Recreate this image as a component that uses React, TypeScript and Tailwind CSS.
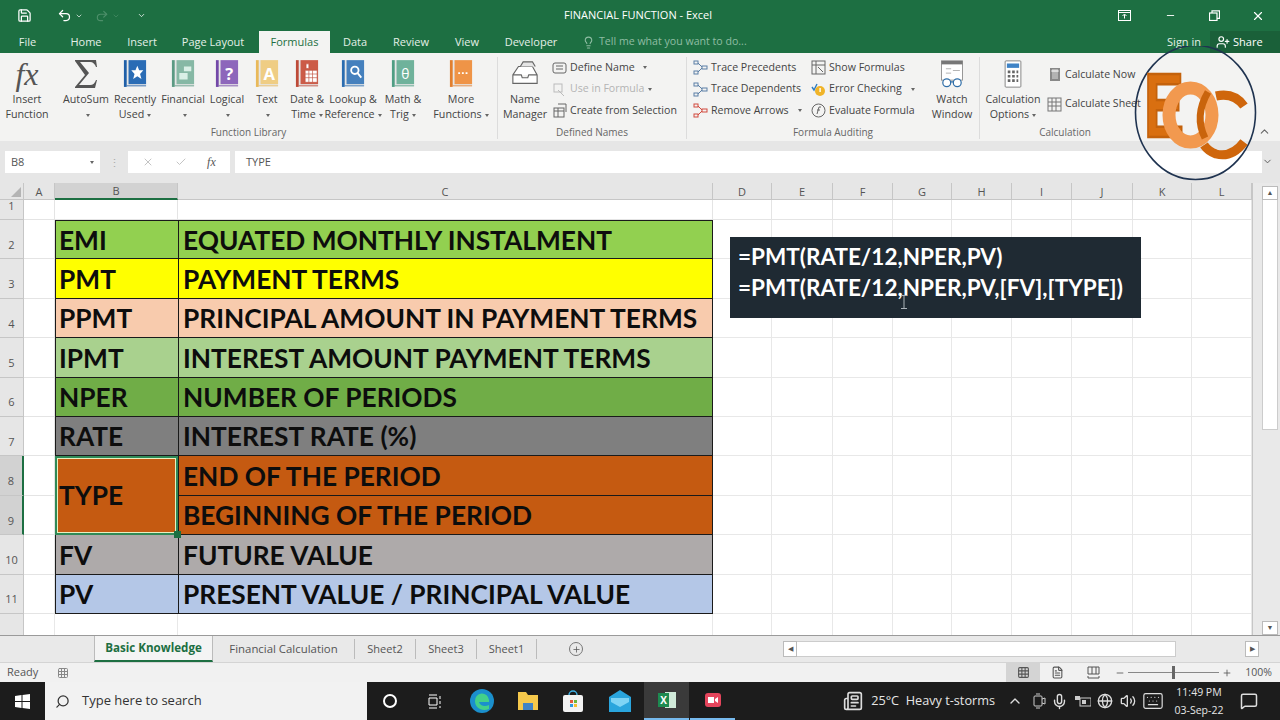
import { Fragment, type ReactNode } from "react";
import {
  Save, Undo2, Redo2, Lightbulb, UserPlus, X, Minus, Search, Mic, Globe, Volume2, Keyboard, MessageSquare,
  ChevronUp, ChevronDown, Plus, Check, Newspaper, Grid3x3, FileText,
} from "lucide-react";

const COLS = ["D", "E", "F", "G", "H", "I", "J", "K", "L"];

const ROWS = [
  { n: 2, k: "EMI", v: "EQUATED MONTHLY INSTALMENT", bg: "bg-[#92d050]" },
  { n: 3, k: "PMT", v: "PAYMENT TERMS", bg: "bg-[#ffff00]" },
  { n: 4, k: "PPMT", v: "PRINCIPAL AMOUNT IN PAYMENT TERMS", bg: "bg-[#f8cbad]" },
  { n: 5, k: "IPMT", v: "INTEREST AMOUNT PAYMENT TERMS", bg: "bg-[#a9d18e]" },
  { n: 6, k: "NPER", v: "NUMBER OF PERIODS", bg: "bg-[#70ad47]" },
  { n: 7, k: "RATE", v: "INTEREST RATE (%)", bg: "bg-[#7f7f7f]" },
  { n: 8, k: "TYPE", v: "END OF THE PERIOD", bg: "bg-[#c55a11]" },
  { n: 9, k: "", v: "BEGINNING OF THE PERIOD", bg: "bg-[#c55a11]" },
  { n: 10, k: "FV", v: "FUTURE VALUE", bg: "bg-[#aeaaaa]" },
  { n: 11, k: "PV", v: "PRESENT VALUE / PRINCIPAL VALUE", bg: "bg-[#b4c7e7]" },
];

function Book({ color, light, children }: { color: string; light: string; children?: ReactNode }) {
  return (
    <svg width="24" height="28" viewBox="0 0 26 30">
      <rect x="1" y="0" width="24" height="28" fill="#e6e6e6" />
      <rect x="1" y="0" width="3" height="29" fill={color} />
      <rect x="6" y="0" width="19" height="26" fill={light} />
      <rect x="4" y="27" width="21" height="1.5" fill={color} opacity="0.6" />
      {children}
    </svg>
  );
}

const BOOKS: { label: string[]; w: string; color: string; light: string; icon: ReactNode }[] = [
  {
    label: ["Recently", "Used ▾"], w: "w-[48px]", color: "#1f5fa8", light: "#2a6cb5",
    icon: <polygon points="15.5,6 17.5,11 22,11 18.5,15 20,20.5 15.5,17.5 11,20.5 12.5,15 9,11 13.5,11" fill="#fff" />,
  },
  {
    label: ["Financial", "▾"], w: "w-[48px]", color: "#5b9a84", light: "#86b8a5",
    icon: <path d="M9 14h9v7H9zM14 7h8v5h-8z" fill="#d9efe6" />,
  },
  {
    label: ["Logical", "▾"], w: "w-[40px]", color: "#7348a8", light: "#8d66bb",
    icon: <text x="15.5" y="21" textAnchor="middle" fontSize="18" fontWeight="700" fill="#fff" fontFamily="Open Sans">?</text>,
  },
  {
    label: ["Text", "▾"], w: "w-[40px]", color: "#e9b95a", light: "#efcd84",
    icon: <text x="15.5" y="21" textAnchor="middle" fontSize="18" fontWeight="700" fill="#fff" fontFamily="Open Sans">A</text>,
  },
  {
    label: ["Date &", "Time ▾"], w: "w-[40px]", color: "#bd4a38", light: "#cc5b47",
    icon: <path d="M11 11h13v13H11zM11 15h13M11 19h13M15 11v13M19 11v13M12 4h3v5h-3z" fill="#fff" stroke="#c0503c" strokeWidth="0.7" />,
  },
  {
    label: ["Lookup &", "Reference ▾"], w: "w-[52px]", color: "#2a6cb0", light: "#4580bd",
    icon: (
      <g fill="none" stroke="#fff" strokeWidth="2">
        <circle cx="15" cy="11" r="4" />
        <path d="M18 14l4 5" />
      </g>
    ),
  },
  {
    label: ["Math &", "Trig ▾"], w: "w-[48px]", color: "#4f9e84", light: "#6fb29b",
    icon: <text x="15.5" y="20" textAnchor="middle" fontSize="15" fill="#fff" fontFamily="Open Sans">θ</text>,
  },
  {
    label: ["More", "Functions ▾"], w: "w-[68px]", color: "#e27f2e", light: "#ef9447",
    icon: <path d="M10 13h2v2h-2zM14 13h2v2h-2zM18 13h2v2h-2z" fill="#fff" />,
  },
];

function Caret({ className = "" }: { className?: string }) {
  return <span className={`inline-block align-middle w-0 h-0 border-x-[2.5px] border-x-transparent border-t-[3px] border-t-[#666] ${className}`} />;
}

function BtnLabel({ lines }: { lines: string[] }) {
  return (
    <div className="mt-[4px] text-center text-[10.7px] leading-[15px] text-[#444] whitespace-nowrap">
      {lines.map((l) =>
        l.includes("▾") ? (
          <div key={l}>
            {l.replace("▾", "").trim()}
            <Caret className="ml-[3px]" />
          </div>
        ) : (
          <div key={l}>{l}</div>
        )
      )}
    </div>
  );
}

function SmallItem({ icon, text, muted, caret }: { icon: ReactNode; text: string; muted?: boolean; caret?: string }) {
  return (
    <div className={`flex items-center gap-[3px] h-[21.5px] text-[10.6px] whitespace-nowrap ${muted ? "text-[#b4b4b4]" : "text-[#444]"}`}>
      <span className="w-[15px] h-[15px] flex items-center justify-center shrink-0">{icon}</span>
      {text}
      {caret && <Caret className={caret} />}
    </div>
  );
}

function Dot({ c = "#5b7fa6" }: { c?: string }) {
  return (
    <svg width="15" height="15" viewBox="0 0 15 15" fill="none" stroke={c} strokeWidth="1">
      <rect x="1" y="1" width="4" height="3" />
      <rect x="1" y="11" width="4" height="3" />
      <rect x="9" y="6" width="5" height="3" />
      <path d="M5 3l4 4M5 12l4-4" />
    </svg>
  );
}

function GroupName({ children }: { children: ReactNode }) {
  return <div className="h-[14px] text-center text-[10px] leading-[14px] text-[#666]">{children}</div>;
}

function Ribbon() {
  return (
    <div className="h-[88px] bg-[#f3f3f2] flex shrink-0 relative">
      {/* Function Library */}
      <div className="w-[498px] border-r border-[#dcdcdc] mt-[4px] mb-[2px] flex flex-col shrink-0">
        <div className="flex h-[68px]">
          <div className="w-[54px] flex flex-col items-center pt-[3px]">
            <div className="h-[28px] text-[32px] leading-[28px] italic text-[#555] font-['Liberation_Serif',serif]">fx</div>
            <BtnLabel lines={["Insert", "Function"]} />
          </div>
          <div className="w-[57px] flex flex-col items-center pt-[3px] pl-[7px]">
            <svg width="24" height="28" viewBox="0 0 24 28" fill="#555">
              <path d="M1 0h21l1 7h-1c-1-3-3-5-6-5H6l9 11-10 12h11c3 0 5-2 6-5h1l-2 8H1v-1l10-12L1 1z" />
            </svg>
            <BtnLabel lines={["AutoSum", "▾"]} />
          </div>
          {BOOKS.map((b) => (
            <div key={b.label[0]} className={`${b.w} flex flex-col items-center pt-[3px]`}>
              <Book color={b.color} light={b.light}>{b.icon}</Book>
              <BtnLabel lines={b.label} />
            </div>
          ))}
        </div>
        <GroupName>Function Library</GroupName>
      </div>
      {/* Defined Names */}
      <div className="w-[189px] border-r border-[#dcdcdc] mt-[4px] mb-[2px] flex flex-col shrink-0">
        <div className="flex h-[68px]">
          <div className="w-[54px] flex flex-col items-center pt-[3px]">
            <svg width="34" height="28" viewBox="0 0 34 30" fill="none" stroke="#666" strokeWidth="1.2">
              <path d="M4 16l6-9h15l5 9v9H4zM4 16h9l1 3h6l1-3h9" fill="#fff" />
              <path d="M12 7l3-5h10l3 5" fill="#e5e5e5" />
            </svg>
            <BtnLabel lines={["Name", "Manager"]} />
          </div>
          <div className="flex flex-col">
            <SmallItem caret="ml-[5px]" icon={<svg width="15" height="12" viewBox="0 0 15 12" fill="none" stroke="#666"><rect x="1" y="1" width="13" height="10" rx="2" /><path d="M4 4h7M4 7h7" /></svg>} text="Define Name" />
            <SmallItem muted caret="ml-[1px]" icon={<svg width="15" height="15" viewBox="0 0 15 15" fill="none" stroke="#bbb"><rect x="2" y="2" width="8" height="8" /><path d="M6 8l6 6" /></svg>} text="Use in Formula" />
            <SmallItem icon={<svg width="15" height="15" viewBox="0 0 15 15" fill="none" stroke="#666"><rect x="2" y="5" width="10" height="9" /><path d="M2 8h10M6 5v9M6 1h8v8" /></svg>} text="Create from Selection" />
          </div>
        </div>
        <GroupName>Defined Names</GroupName>
      </div>
      {/* Formula Auditing */}
      <div className="w-[293px] border-r border-[#dcdcdc] mt-[4px] mb-[2px] flex flex-col shrink-0">
        <div className="flex h-[68px] pl-[6px]">
          <div className="flex flex-col w-[118px]">
            <SmallItem icon={<Dot />} text="Trace Precedents" />
            <SmallItem icon={<Dot />} text="Trace Dependents" />
            <SmallItem caret="ml-[6px]" icon={<Dot c="#d24a3e" />} text="Remove Arrows" />
          </div>
          <div className="flex flex-col w-[118px]">
            <SmallItem icon={<svg width="15" height="15" viewBox="0 0 15 15" fill="none" stroke="#666"><rect x="1" y="1" width="13" height="13" /><path d="M1 5h13M5 1v13M7 7l5 5" /></svg>} text="Show Formulas" />
            <SmallItem caret="ml-[6px]" icon={<svg width="15" height="15" viewBox="0 0 15 15"><path d="M1 5l2 3 3-6" fill="none" stroke="#2f7dc4" strokeWidth="1.4" /><circle cx="9" cy="9" r="5" fill="#f0b429" /><rect x="8.4" y="6" width="1.4" height="4" fill="#fff" /></svg>} text="Error Checking" />
            <SmallItem icon={<svg width="15" height="15" viewBox="0 0 15 15" fill="none" stroke="#666"><circle cx="7.5" cy="7.5" r="6.5" /><path d="M6 11l2-7h2M6 7h3" /></svg>} text="Evaluate Formula" />
          </div>
          <div className="flex flex-col items-center w-[46px] pt-[3px]">
            <svg width="28" height="28" viewBox="0 0 30 32" fill="none">
              <rect x="3" y="1" width="24" height="22" fill="#fff" stroke="#8a8a8a" />
              <rect x="3" y="1" width="24" height="4" fill="#777" />
              <path d="M8 10h6M16 12h8M8 15h6" stroke="#aaa" />
              <circle cx="9" cy="26" r="4.5" fill="#fff" stroke="#2f6ea8" strokeWidth="1.4" />
              <circle cx="21" cy="26" r="4.5" fill="#fff" stroke="#2f6ea8" strokeWidth="1.4" />
              <path d="M13 25h4" stroke="#2f6ea8" strokeWidth="1.4" />
            </svg>
            <BtnLabel lines={["Watch", "Window"]} />
          </div>
        </div>
        <GroupName>Formula Auditing</GroupName>
      </div>
      {/* Calculation */}
      <div className="w-[170px] mt-[4px] mb-[2px] flex flex-col shrink-0">
        <div className="flex h-[68px]">
          <div className="w-[66px] flex flex-col items-center pt-[3px]">
            <svg width="18" height="28" viewBox="0 0 20 32" fill="none">
              <rect x="1" y="1" width="18" height="30" rx="1" fill="#fff" stroke="#777" />
              <rect x="3" y="4" width="14" height="5" fill="#3f83c6" />
              <path d="M4 12h3v3H4zM9 12h3v3H9zM14 12h2v3h-2zM4 17h3v3H4zM9 17h3v3H9zM14 17h2v3h-2zM4 22h3v3H4zM9 22h3v3H9zM14 22h2v3h-2z" fill="#666" />
            </svg>
            <BtnLabel lines={["Calculation", "Options ▾"]} />
          </div>
          <div className="flex flex-col pt-[7px] gap-[8px] pl-[1px]">
            <SmallItem icon={<svg width="12" height="15" viewBox="0 0 12 15"><rect x="1" y="1" width="10" height="13" fill="#888" /><path d="M3 3h6v2H3zM3 7h6M3 9h6M3 11h6" stroke="#ddd" fill="#ddd" /></svg>} text="Calculate Now" />
            <SmallItem icon={<svg width="15" height="15" viewBox="0 0 15 15" fill="none" stroke="#777"><rect x="1" y="1" width="13" height="13" /><path d="M1 5h13M1 9h13M5 1v13M9 1v13" /></svg>} text="Calculate Sheet" />
          </div>
        </div>
        <GroupName>Calculation</GroupName>
      </div>
      <ChevronUp size={13} className="absolute right-[9px] bottom-[3px] text-[#666]" />
    </div>
  );
}

function Logo() {
  return (
    <svg className="absolute left-[1132px] top-[46px]" width="126" height="138" viewBox="0 0 126 138">
      <ellipse cx="63.5" cy="66.5" rx="60" ry="67" fill="none" stroke="#1f3350" strokeWidth="1.6" />
      <text x="12" y="91" fontFamily="Liberation Sans" fontWeight="700" fontSize="90" fill="#d96f10" stroke="#c4620c" strokeWidth="2.5" textLength="40" lengthAdjust="spacingAndGlyphs">E</text>
      <path d="M112 60Q102 46 84 50" fill="none" stroke="#cf660c" strokeWidth="9" />
      <path d="M112 96Q100 112 84 108Q76 105 72 99" fill="none" stroke="#cf660c" strokeWidth="9" />
      <ellipse cx="58.5" cy="69" rx="21.5" ry="27" fill="none" stroke="#f2994f" strokeWidth="13" />
      <path d="M76 46Q62 70 73 92" fill="none" stroke="#c9640c" strokeWidth="7" />
    </svg>
  );
}

export default function App() {
  return (
    <div className="relative w-[1280px] h-[720px] overflow-hidden flex flex-col bg-white font-['Open_Sans',sans-serif]">
      {/* title bar */}
      <div className="h-[31px] bg-[#1d6f42] flex items-center shrink-0 text-white relative">
        <Save size={15} className="ml-[17px]" />
        <Undo2 size={15} className="ml-[25px]" />
        <ChevronDown size={8} className="ml-[3px]" />
        <Redo2 size={14} className="ml-[12px] text-[#4d8f6a]" />
        <ChevronDown size={8} className="ml-[3px] text-[#4d8f6a]" />
        <ChevronDown size={9} className="ml-[17px]" />
        <div className="flex-1 text-center text-[11px] pl-[12px]">FINANCIAL FUNCTION - Excel</div>
        <svg className="mr-[34px]" width="13" height="11" viewBox="0 0 13 11" fill="none" stroke="#fff">
          <rect x="0.5" y="0.5" width="12" height="10" />
          <path d="M0.5 2.5h12M6.5 8.5v-4M4.5 6l2-2 2 2" />
        </svg>
        <Minus size={11} className="mr-[33px]" />
        <svg className="mr-[31px]" width="11" height="11" viewBox="0 0 11 11" fill="none" stroke="#fff" strokeWidth="1.2">
          <rect x="0.5" y="3" width="7.5" height="7.5" />
          <path d="M3 3V0.8h7.5v7.5H8" />
        </svg>
        <X size={14} className="mr-[15px]" />
      </div>
      {/* tabs */}
      <div className="h-[22px] bg-[#1d6f42] flex items-end shrink-0 text-[11px] text-[#e4efe8]">
        {[
          ["File", "w-[55px]"], ["Home", "w-[62px]"], ["Insert", "w-[50px]"], ["Page Layout", "w-[92px]"],
        ].map(([t, w]) => (
          <div key={t} className={`${w} h-[22px] flex items-center justify-center`}>{t}</div>
        ))}
        <div className="w-[71px] h-[22px] flex items-center justify-center bg-[#f3f3f2] text-[#1d6f42]">Formulas</div>
        {[
          ["Data", "w-[50px]"], ["Review", "w-[62px]"], ["View", "w-[50px]"], ["Developer", "w-[78px]"],
        ].map(([t, w]) => (
          <div key={t} className={`${w} h-[22px] flex items-center justify-center`}>{t}</div>
        ))}
        <div className="h-[22px] flex items-center ml-[12px] text-[#8fbda3] text-[10.6px] gap-[4px]">
          <Lightbulb size={13} />
          Tell me what you want to do...
        </div>
        <div className="flex-1" />
        <div className="h-[22px] flex items-center">Sign in</div>
        <div className="h-[22px] w-[70px] ml-[9px] bg-[#1a6039] flex items-center gap-[3px] pl-[6px] text-white">
          <UserPlus size={14} />
          Share
        </div>
      </div>
      <Ribbon />
      {/* formula bar */}
      <div className="h-[42px] bg-[#e6e6e6] flex items-center gap-[5px] pl-[5px] pr-[18px] shrink-0 text-[11px] text-[#555]">
        <div className="w-[95px] h-[22px] bg-white flex items-center justify-between px-[6px]">
          B8 <Caret />
        </div>
        <div className="w-[18px] text-center text-[#aaa] leading-none">⋮</div>
        <div className="w-[102px] h-[22px] bg-white flex items-center justify-around px-[4px] text-[#c4c4c4]">
          <X size={12} />
          <Check size={12} />
          <span className="italic text-[#555] font-['Liberation_Serif',serif] text-[12px]">fx</span>
        </div>
        <div className="flex-1 h-[22px] bg-white flex items-center pl-[11px]">TYPE</div>
      </div>
      <ChevronDown size={11} className="absolute left-[1262px] top-[156px] text-[#555]" />
      {/* sheet */}
      <div className="flex-1 flex min-h-0">
        <div className="w-[1252px] grid grid-cols-[24px_31px_123px_535px_59px_61px_60px_59px_60px_60px_61px_59px_60px] grid-rows-[17px_20px_repeat(10,39.4px)_1fr] text-[11px] text-[#555]">
          {/* header row */}
          <div className="bg-[#e6e6e6] border-r border-[#c6c6c6] border-b flex items-end justify-end p-[2px]">
            <div className="w-0 h-0 border-l-[10px] border-l-transparent border-b-[10px] border-b-[#b4b4b4]" />
          </div>
          <div className="bg-[#e6e6e6] border-r border-b border-[#c6c6c6] flex items-center justify-center pt-[2px]">A</div>
          <div className="bg-[#d2d2d2] border-r border-[#c6c6c6] border-b-2 border-b-[#1d6f42] flex items-center justify-center pt-[2px]">B</div>
          {["C", ...COLS].map((c) => (
            <div key={c} className="bg-[#e6e6e6] border-r border-b border-[#c6c6c6] flex items-center justify-center pt-[2px]">{c}</div>
          ))}
          {/* row 1 */}
          <div className="bg-[#e6e6e6] border-r border-b border-[#c6c6c6] flex items-center justify-center pb-[6px]">1</div>
          {Array.from({ length: 12 }).map((_, i) => (
            <div key={i} className="border-r border-b border-[#e4e4e4]" />
          ))}
          {ROWS.map((r) => {
            const active = r.n === 8 || r.n === 9;
            return (
              <Fragment key={r.n}>
                <div className={`border-b flex items-end justify-center pb-[5px] ${active ? "bg-[#d2d2d2] border-[#c6c6c6] border-r-2 border-r-[#1d6f42]" : "bg-[#e6e6e6] border-r border-[#c6c6c6]"}`}>
                  {r.n}
                </div>
                <div className="border-r border-b border-[#e4e4e4]" />
                {r.n === 8 ? (
                  <div className={`row-span-2 ${r.bg} border-2 border-[#2f8a57] outline outline-[#e8f0c0] -outline-offset-3 flex items-center pl-[2px] text-[26.3px] font-bold text-[#0d0d0d] font-['Lato',sans-serif] relative`}>
                    {r.k}
                    <div className="absolute -right-[5px] -bottom-[5px] w-[7px] h-[7px] bg-[#1d6f42]" />
                  </div>
                ) : r.n === 9 ? null : (
                  <div className={`${r.bg} border-[#1a1a1a] border-l border-b ${r.n === 2 ? "border-t" : ""} flex items-center pl-[3px] pt-[2px] text-[26.3px] font-bold text-[#0d0d0d] font-['Lato',sans-serif]`}>
                    {r.k}
                  </div>
                )}
                <div className={`${r.bg} border-[#1a1a1a] border-l border-r border-b ${r.n === 2 ? "border-t" : ""} flex items-center pl-[4px] pt-[2px] text-[26.3px] font-bold text-[#0d0d0d] font-['Lato',sans-serif] whitespace-nowrap overflow-hidden`}>
                  {r.v}
                </div>
                {COLS.map((c) => (
                  <div key={c} className="border-r border-b border-[#e8e8e8]" />
                ))}
              </Fragment>
            );
          })}
          {/* bottom partial row */}
          <div className="bg-[#e6e6e6] border-r border-[#c6c6c6]" />
          {Array.from({ length: 12 }).map((_, i) => (
            <div key={i} className="border-r border-[#e8e8e8]" />
          ))}
        </div>
        {/* vertical scrollbar */}
        <div className="flex-1 bg-[#e9e9e9] flex flex-col items-end pr-[2px] pt-[3px] border-l border-[#c6c6c6]">
          <div className="w-[16px] h-[14px] bg-white border border-[#bbb] flex items-center justify-center text-[7px] text-[#555]">▲</div>
          <div className="w-[16px] h-[230px] bg-white border-x border-b border-[#ccc]" />
          <div className="flex-1" />
          <div className="w-[16px] h-[14px] bg-white border border-[#bbb] flex items-center justify-center text-[7px] text-[#555]">▼</div>
        </div>
      </div>
      {/* sheet tabs */}
      <div className="h-[27px] bg-[#e9e9e9] border-t border-[#9a9a9a] flex items-center shrink-0 text-[11px] text-[#555] relative">
        <div className="w-[94px]" />
        <div className="h-[26px] w-[119px] -mt-[1px] bg-[#f4f4f4] border-x border-b-2 border-x-[#bbb] border-b-[#1d6f42] flex items-center justify-center font-bold text-[11.6px] text-[#1d6f42]">Basic Knowledge</div>
        <div className="w-[142px] text-center border-r border-[#bbb] leading-[20px] text-[11.4px]">Financial Calculation</div>
        <div className="w-[61px] text-center border-r border-[#bbb] leading-[20px]">Sheet2</div>
        <div className="w-[61px] text-center border-r border-[#bbb] leading-[20px]">Sheet3</div>
        <div className="w-[60px] text-center border-r border-[#bbb] leading-[20px]">Sheet1</div>
        <div className="ml-[32px] w-[14px] h-[14px] rounded-full border border-[#777] flex items-center justify-center">
          <Plus size={9} />
        </div>
        <div className="ml-auto mr-[21px] flex items-center">
          <div className="w-[14px] h-[16px] bg-white border border-[#bbb] text-[7px] flex items-center justify-center">◀</div>
          <div className="w-[379px] h-[16px] bg-white border-y border-r border-[#ccc]" />
          <div className="w-[69px]" />
          <div className="w-[14px] h-[16px] bg-white border border-[#bbb] text-[7px] flex items-center justify-center">▶</div>
        </div>
      </div>
      {/* status bar */}
      <div className="h-[20px] bg-[#f1f1f1] border-t border-[#d4d4d4] flex items-center shrink-0 text-[11px] text-[#555]">
        <span className="ml-[7px]">Ready</span>
        <Grid3x3 size={12} className="ml-[19px] text-[#888]" />
        <div className="flex-1" />
        <div className="w-[34px] h-[20px] bg-[#d4d4d4] flex items-center justify-center"><Grid3x3 size={13} /></div>
        <FileText size={13} className="ml-[11px]" />
        <svg className="ml-[23px]" width="13" height="13" viewBox="0 0 13 13" fill="none" stroke="#555">
          <path d="M1 1h11v7H1zM5 1v7M9 1v7M1 10v2h11v-2" />
        </svg>
        <Minus size={10} className="ml-[15px]" />
        <div className="ml-[3px] w-[91px] h-px bg-[#888] relative">
          <div className="absolute left-[44px] -top-[6px] w-[3px] h-[13px] bg-[#666]" />
        </div>
        <Plus size={10} className="ml-[3px]" />
        <span className="ml-[13px] mr-[8px] text-[10.5px]">100%</span>
      </div>
      {/* taskbar */}
      <div className="h-[38px] bg-[#1c1c1c] flex items-center shrink-0 text-white">
        <div className="w-[45px] flex justify-center">
          <svg width="15" height="15" viewBox="0 0 15 15" fill="#fff">
            <path d="M0 2l6.5-1v6H0zM7.5 1L15 0v7H7.5zM0 8h6.5v6L0 13zM7.5 8H15v7l-7.5-1z" />
          </svg>
        </div>
        <div className="w-[322px] h-[38px] bg-[#f2f2f2] flex items-center text-[#333] text-[13px]">
          <Search size={15} className="ml-[10px] -scale-x-100" />
          <span className="ml-[12px]">Type here to search</span>
        </div>
        <div className="w-[14px] h-[14px] ml-[16px] rounded-full border-2 border-white" />
        <svg className="ml-[30px]" width="15" height="15" viewBox="0 0 15 15" fill="none" stroke="#fff">
          <path d="M2 1h8M2 14h8M2 4h8v7H2zM13 2v3M13 7v3M13 12v2" />
        </svg>
        <svg className="ml-[27px]" width="26" height="26" viewBox="0 0 26 26">
          <circle cx="13" cy="13" r="12" fill="#1b8fcc" />
          <path d="M6 13a7 7 0 0 1 14-1v2H10c1 4 6 5 10 3v4c-7 3-14-1-14-8z" fill="#43d08a" />
        </svg>
        <svg className="ml-[22px]" width="22" height="20" viewBox="0 0 22 20">
          <path d="M1 1h8l2 3h10v15H1z" fill="#f5c84b" />
          <rect x="6" y="12" width="10" height="7" fill="#3f83c6" />
        </svg>
        <svg className="ml-[23px]" width="22" height="24" viewBox="0 0 22 24">
          <path d="M7 6a4 4 0 0 1 8 0" fill="none" stroke="#3fb4e8" strokeWidth="1.4" />
          <rect x="1" y="6" width="20" height="17" rx="2" fill="#f2f2f2" />
          <path d="M8 11h3v3H8z" fill="#e25a3c" /><path d="M12 11h3v3h-3z" fill="#6cb83c" /><path d="M8 15h3v3H8z" fill="#2f9be0" /><path d="M12 15h3v3h-3z" fill="#f5c030" />
        </svg>
        <svg className="ml-[24px]" width="24" height="24" viewBox="0 0 24 24">
          <path d="M1 8l11-7 11 7v15H1z" fill="#2aa5dd" />
          <path d="M3 9h18v4l-9 5-9-5z" fill="#7fd4f5" />
        </svg>
        <div className="ml-[12px] w-[45px] h-[38px] bg-[#3a3a3a] border-b-2 border-[#76b9ed] flex items-center justify-center">
          <svg width="20" height="18" viewBox="0 0 20 18">
            <rect x="8" y="1" width="11" height="16" fill="#cfe8d8" />
            <rect x="1" y="2" width="11" height="14" fill="#1d8a50" />
            <text x="6.5" y="13" textAnchor="middle" fontSize="10" fontWeight="700" fill="#fff" fontFamily="Open Sans">X</text>
          </svg>
        </div>
        <div className="ml-[1px] w-[45px] h-[38px] border-b-2 border-[#76b9ed] flex items-center justify-center">
          <svg width="18" height="16" viewBox="0 0 18 16">
            <rect x="1" y="1" width="16" height="14" rx="3" fill="#e5455c" />
            <path d="M4 5h6v6H4zM11 7l3-2v6l-3-2z" fill="#fff" />
          </svg>
        </div>
        <div className="flex-1" />
        <Newspaper size={20} className="text-[#ddd]" />
        <span className="ml-[8px] text-[12.7px] text-[#e6e6e6] whitespace-nowrap">25°C&nbsp; Heavy t-storms</span>
        <ChevronUp size={16} className="ml-[12px] text-[#ddd]" />
        <svg className="ml-[9px]" width="14" height="18" viewBox="0 0 14 18" fill="none" stroke="#ccc">
          <rect x="2" y="4" width="8" height="10" rx="1" /><path d="M10 7l3-1v6l-3-1M4 2h4M4 16h4" />
        </svg>
        <Mic size={17} className="ml-[5px] text-[#ddd]" />
        <svg className="ml-[7px]" width="16" height="12" viewBox="0 0 16 12" fill="#ccc">
          <rect x="0" y="1" width="5" height="4" /><rect x="5" y="3" width="11" height="8" fill="none" stroke="#ccc" /><rect x="7" y="5" width="4" height="4" />
        </svg>
        <Globe size={16} className="ml-[6px] text-[#ddd]" />
        <Volume2 size={16} className="ml-[7px] text-[#ddd]" />
        <Keyboard size={22} className="ml-[6px] text-[#ddd]" strokeWidth={1.3} />
        <div className="ml-[9px] w-[52px] text-center text-[10.5px] leading-[18px] text-[#e6e6e6] whitespace-nowrap">
          <div>11:49 PM</div>
          <div>03-Sep-22</div>
        </div>
        <MessageSquare size={18} className="ml-[15px] mr-[22px] text-[#ddd]" />
      </div>
      {/* instruction box over the sheet */}
      <div className="absolute left-[730px] top-[237px] w-[411px] h-[81px] bg-[#1f2a33] text-white font-['Lato',sans-serif] font-bold text-[22.5px] leading-[31px] pl-[8px] pt-[4px] whitespace-nowrap">
        <div>=PMT(RATE/12,NPER,PV)</div>
        <div>=PMT(RATE/12,NPER,PV,[FV],[TYPE])</div>
      </div>
      <svg className="absolute left-[900px] top-[295px]" width="8" height="14" viewBox="0 0 8 14" fill="none" stroke="#aab2b8">
        <path d="M1 .5h6M4 .5v13M1 13.5h6" />
      </svg>
      <Logo />
    </div>
  );
}
